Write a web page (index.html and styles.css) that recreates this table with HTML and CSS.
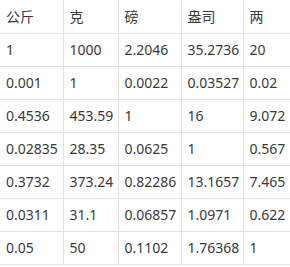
FILE: index.html
```html
<!DOCTYPE html>
<html lang="zh">
<head>
<meta charset="utf-8">
<link rel="stylesheet" href="styles.css">
</head>
<body>
<table class="units">
  <colgroup>
    <col class="c1"><col class="c2"><col class="c3"><col class="c4"><col class="c5">
  </colgroup>
  <thead>
    <tr><th>公斤</th><th>克</th><th>磅</th><th>盎司</th><th>两</th></tr>
  </thead>
  <tbody>
    <tr><td>1</td><td>1000</td><td>2.2046</td><td>35.2736</td><td>20</td></tr>
    <tr><td>0.001</td><td>1</td><td>0.0022</td><td>0.03527</td><td>0.02</td></tr>
    <tr><td>0.4536</td><td>453.59</td><td>1</td><td>16</td><td>9.072</td></tr>
    <tr><td>0.02835</td><td>28.35</td><td>0.0625</td><td>1</td><td>0.567</td></tr>
    <tr><td>0.3732</td><td>373.24</td><td>0.82286</td><td>13.1657</td><td>7.465</td></tr>
    <tr><td>0.0311</td><td>31.1</td><td>0.06857</td><td>1.0971</td><td>0.622</td></tr>
    <tr><td>0.05</td><td>50</td><td>0.1102</td><td>1.76368</td><td>1</td></tr>
  </tbody>
</table>
</body>
</html>
```
FILE: styles.css
```css
html, body {
  margin: 0;
  padding: 0;
  background: #ffffff;
}
.units {
  border-collapse: collapse;
  table-layout: fixed;
  width: 300px;
  font-family: "Noto Sans", "Noto Sans CJK SC", sans-serif;
  font-size: 14px;
  color: #3a3a3a;
}
.c1 { width: 63px; }
.c2 { width: 55px; }
.c3 { width: 63px; }
.c4 { width: 62px; }
.c5 { width: 57px; }
.units th,
.units td {
  height: 33px;
  padding: 0 6px;
  text-align: left;
  font-weight: normal;
  border-right: 1px solid #e3e3e3;
  border-bottom: 1px solid #e3e3e3;
  white-space: nowrap;
  overflow: hidden;
  box-sizing: border-box;
}
```
